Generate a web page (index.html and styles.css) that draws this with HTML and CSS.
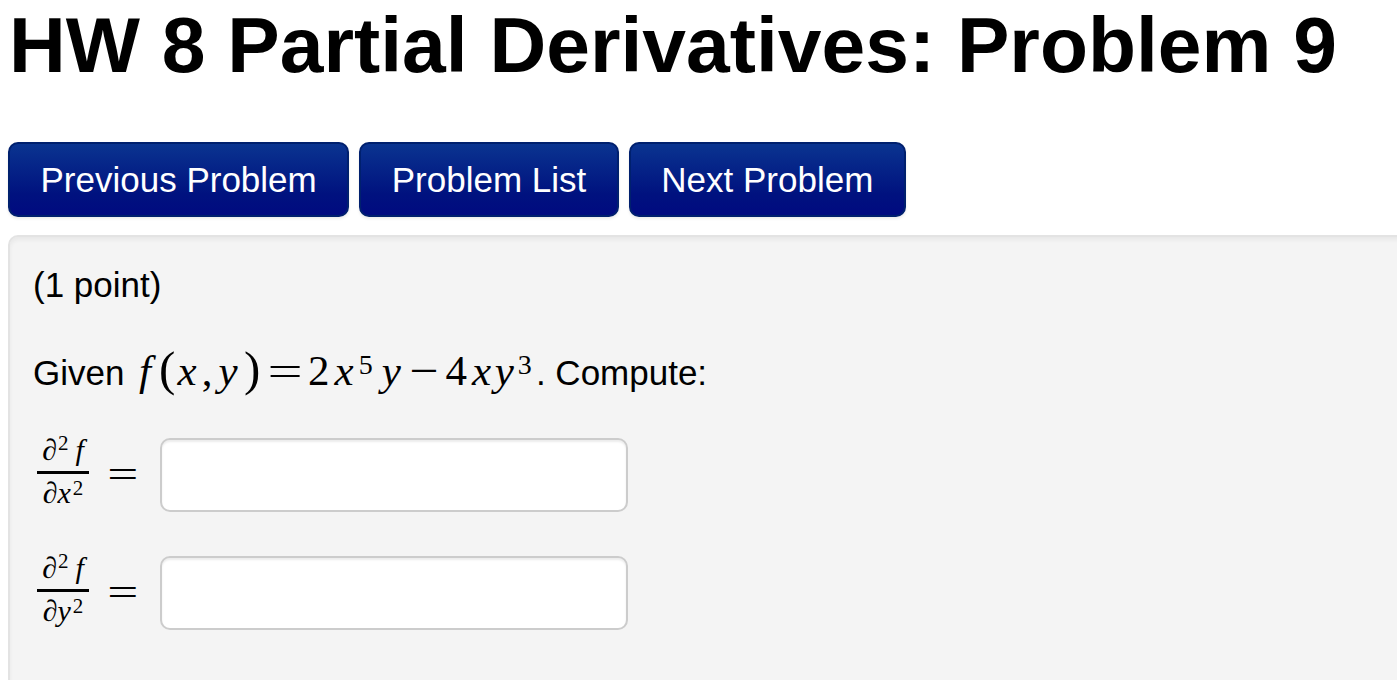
FILE: index.html
```html
<!DOCTYPE html>
<html>
<head>
<meta charset="utf-8">
<link rel="stylesheet" href="styles.css">
</head>
<body>
<h1 class="title">HW 8 Partial Derivatives: Problem 9</h1>
<div class="nav">
  <a class="btn">Previous Problem</a>
  <a class="btn">Problem List</a>
  <a class="btn">Next Problem</a>
</div>
<div class="well">
  <p class="point">(1 point)</p>
  <p class="given">Given <span class="math"><span class="g w-f"><i>f</i></span><span class="g w-lp paren">(</span><span class="g w-x1"><i>x</i></span><span class="g w-cm">,</span><span class="g w-y1"><i>y</i></span><span class="g w-rp paren">)</span><span class="g w-eq"><span class="wide">=</span></span><span class="g w-2">2</span><span class="g w-x2"><i>x</i></span><span class="sup w-s5">5</span><span class="g w-y2"><i>y</i></span><span class="g w-mn"><span class="wide2">−</span></span><span class="g w-4">4</span><span class="g w-x3"><i>x</i></span><span class="g w-y3"><i>y</i></span><span class="sup w-s3">3</span></span><span class="after">. Compute:</span></p>
  <div class="row">
    <span class="frac"><span class="numer">∂<sup>2</sup><i>f</i></span><span class="bar"></span><span class="denom">∂<i>x</i><sup>2</sup></span></span>
    <span class="eq"><span class="wide">=</span></span>
    <input class="answer" type="text">
  </div>
  <div class="row row2">
    <span class="frac"><span class="numer">∂<sup>2</sup><i>f</i></span><span class="bar"></span><span class="denom">∂<i>y</i><sup>2</sup></span></span>
    <span class="eq"><span class="wide">=</span></span>
    <input class="answer" type="text">
  </div>
</div>
</body>
</html>
```
FILE: styles.css
```css
html, body {
  margin: 0;
  padding: 0;
  background: #fff;
  overflow: hidden;
}
body {
  padding: 0 8px;
  font-family: "Liberation Sans", Arial, sans-serif;
  color: #000;
}
.title {
  margin: 0 0 0 1px;
  font-size: 78.6px;
  font-weight: bold;
  line-height: normal;
  white-space: nowrap;
}
.nav {
  margin-top: 51px;
  display: flex;
  gap: 10px;
}
.btn {
  display: inline-block;
  font-size: 35px;
  line-height: 50px;
  padding: 10.5px 30.5px;
  border: 2px solid #00206e;
  border-radius: 10px;
  color: #fff;
  background: linear-gradient(to bottom, #0a3490 0%, #00127f 70%, #000a80 100%);
  box-shadow: 0 2px 3px rgba(0,0,0,0.08);
  white-space: nowrap;
}
.well {
  margin-top: 18px;
  margin-right: -60px;
  height: 520px;
  background: #f4f4f4;
  border: 2px solid #e3e3e3;
  border-radius: 10px;
  box-shadow: inset 0 3px 4px rgba(0,0,0,0.05);
  padding: 23px 22px;
  font-size: 35px;
}
.point {
  margin: 0 0 0 1px;
  line-height: 50px;
}
.given {
  margin: 38px 0 0 1px;
  height: 50px;
  line-height: 50px;
  white-space: nowrap;
}

/* inline math, laid out glyph box by glyph box */
.math {
  font-family: "Liberation Serif", "Times New Roman", serif;
  font-size: 43px;
  line-height: 0;
  margin-left: -1px;
}
.math i { font-style: italic; }
.g {
  display: inline-flex;
  justify-content: center;
  line-height: 0;
}
.paren { font-size: 49px; }
.sup {
  display: inline-block;
  text-align: center;
  font-size: 28px;
  line-height: 28px;
  vertical-align: 11px;
}
.wide {
  display: inline-block;
  transform: scaleX(1.45);
}
.wide2 {
  display: inline-block;
  transform: scaleX(1.2);
}
.w-f  { width: 23.5px; }
.w-lp { width: 21px; }
.w-x1 { width: 18.75px; }
.w-cm { width: 21.5px; }
.w-y1 { width: 20.25px; }
.w-rp { width: 28px; }
.w-eq { width: 38.25px; }
.w-2  { width: 28.75px; }
.w-x2 { width: 21.75px; }
.w-s5 { width: 21.75px; }
.w-y2 { width: 29.25px; }
.w-mn { width: 36.5px; }
.w-4  { width: 27.75px; }
.w-x3 { width: 23px; }
.w-y3 { width: 22.25px; }
.w-s3 { width: 18.5px; }
.after { margin-left: 2px; }

/* answer rows */
.row {
  margin-top: 40px;
  display: flex;
  align-items: center;
  height: 74px;
}
.row2 { margin-top: 44px; }
.frac {
  display: inline-flex;
  flex-direction: column;
  align-items: center;
  font-family: "Liberation Serif", "Times New Roman", serif;
  font-size: 30px;
  margin: 0 0 7px 5px;
  width: 52px;
}
.frac i { font-style: italic; }
.numer, .denom {
  display: block;
  height: 24px;
  line-height: 24px;
  white-space: nowrap;
}
.numer sup {
  font-size: 21px;
  line-height: 0;
  vertical-align: 10px;
  margin: 0 7px 0 1px;
}
.denom sup {
  font-size: 21px;
  line-height: 0;
  vertical-align: 8px;
  margin-left: 2px;
}
.bar {
  display: block;
  width: 52px;
  height: 3px;
  background: #000;
  margin: 9px 0 7px;
}
.eq {
  display: inline-flex;
  justify-content: center;
  width: 28px;
  margin: 0 0 2px 20px;
  font-family: "Liberation Serif", "Times New Roman", serif;
  font-size: 38px;
  line-height: 1;
}
.answer {
  margin-left: 23px;
  width: 468px;
  height: 74px;
  box-sizing: border-box;
  border: 2px solid #cccccc;
  border-radius: 10px;
  background: #fff;
  box-shadow: inset 0 2px 2px rgba(0,0,0,0.075);
  outline: none;
  padding: 0 12px;
  font-size: 35px;
}
```
